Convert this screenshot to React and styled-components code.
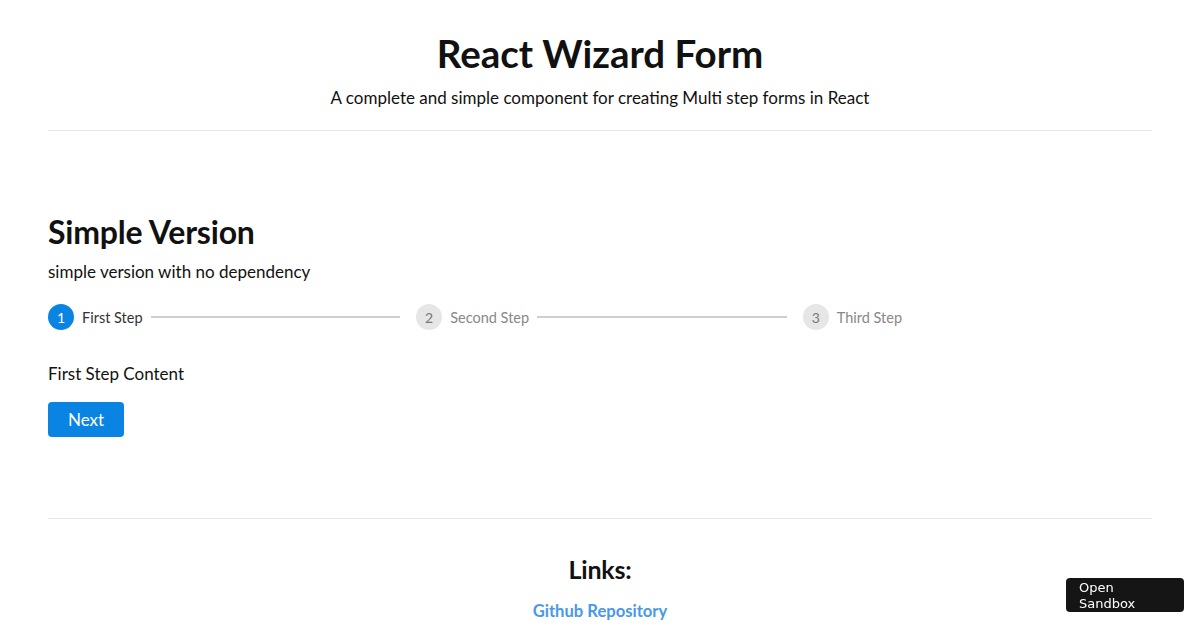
import React, { useState } from 'react';
import styled, { createGlobalStyle } from 'styled-components';

const GlobalStyle = createGlobalStyle`
    body {
        margin: 0;
        background: #fff;
        color: #111;
        font-family: 'Lato', 'Open Sans', sans-serif;
    }
`;

const Page = styled.div`
    padding: 0 48px;
`;

const Header = styled.header`
    text-align: center;
    padding: 29px 0 20px;
    border-bottom: 1px solid #e8e8e8;
`;

const Title = styled.h1`
    font-size: 38.5px;
    font-weight: 700;
    margin: 0 0 9px;
    line-height: 48px;
`;

const Tagline = styled.p`
    font-size: 17px;
    margin: 0;
    line-height: 24px;
`;

const Section = styled.section`
    padding: 81px 0 81px;
    border-bottom: 1px solid #e8e8e8;
`;

const SectionTitle = styled.h2`
    font-size: 32px;
    font-weight: 700;
    margin: 0 0 8px;
    line-height: 40px;
    letter-spacing: -0.2px;
`;

const SectionDesc = styled.p`
    font-size: 17px;
    margin: 0 0 20px;
    line-height: 24px;
`;

const Steps = styled.div`
    display: flex;
    align-items: center;
    width: 854px;
    height: 26px;
`;

const Step = styled.div`
    display: flex;
    align-items: center;
    gap: 8px;
`;

const Circle = styled.span`
    width: 26px;
    height: 26px;
    border-radius: 50%;
    display: flex;
    align-items: center;
    justify-content: center;
    font-size: 14px;
    background: ${p => (p.$active ? '#0a84e3' : '#e6e6e6')};
    color: ${p => (p.$active ? '#fff' : '#777')};
`;

const StepLabel = styled.span`
    font-size: 14.5px;
    color: ${p => (p.$active ? '#333' : '#888')};
`;

const Connector = styled.span`
    flex: 1;
    height: 2px;
    background: #cfcfcf;
    margin: 0 16px 0 8px;
`;

const Content = styled.p`
    font-size: 17px;
    line-height: 24px;
    margin: 32px 0 16px;
`;

const Button = styled.button`
    display: block;
    font-family: inherit;
    font-size: 17px;
    color: #fff;
    background: #0a84e3;
    border: none;
    border-radius: 4px;
    width: 76px;
    height: 35px;
    cursor: pointer;
`;

const Links = styled.div`
    text-align: center;
    padding-top: 34px;
`;

const LinksTitle = styled.h3`
    font-size: 25px;
    font-weight: 700;
    margin: 0 0 14px;
    line-height: 32px;
    letter-spacing: -0.2px;
`;

const LinkLine = styled.p`
    margin: 0;
    line-height: 24px;
`;

const Link = styled.a`
    color: #4a98e6;
    font-weight: 700;
    font-size: 16.6px;
    text-decoration: none;
`;

const SandboxButton = styled.a`
    position: fixed;
    right: 16px;
    bottom: 18px;
    width: 118px;
    height: 34px;
    box-sizing: border-box;
    padding: 2px 13px;
    background: #151515;
    color: #fff;
    border-radius: 4px;
    font-family: 'DejaVu Sans', sans-serif;
    font-size: 13px;
    line-height: 16px;
    text-decoration: none;
`;

const steps = ['First Step', 'Second Step', 'Third Step'];

export default function App() {
    const [current, setCurrent] = useState(0);

    return (
        <Page>
            <GlobalStyle />
            <Header>
                <Title>React Wizard Form</Title>
                <Tagline>A complete and simple component for creating Multi step forms in React</Tagline>
            </Header>
            <Section>
                <SectionTitle>Simple Version</SectionTitle>
                <SectionDesc>simple version with no dependency</SectionDesc>
                <Steps>
                    {steps.map((label, i) => (
                        <React.Fragment key={label}>
                            <Step>
                                <Circle $active={i === current}>{i + 1}</Circle>
                                <StepLabel $active={i === current}>{label}</StepLabel>
                            </Step>
                            {i < steps.length - 1 && <Connector />}
                        </React.Fragment>
                    ))}
                </Steps>
                <Content>{steps[current]} Content</Content>
                <Button onClick={() => setCurrent((current + 1) % steps.length)}>Next</Button>
            </Section>
            <Links>
                <LinksTitle>Links:</LinksTitle>
                <LinkLine>
                    <Link href="#">Github Repository</Link>
                </LinkLine>
            </Links>
            <SandboxButton href="#">Open Sandbox</SandboxButton>
        </Page>
    );
}
